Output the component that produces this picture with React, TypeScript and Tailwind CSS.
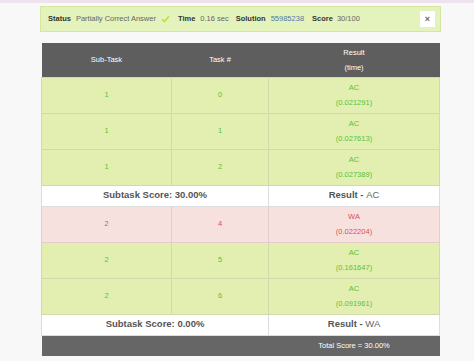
import React from 'react'

type Row = {
  sub: number
  task: number
  verdict: string
  time: string
}

const groups: { rows: Row[]; score: string; result: string }[] = [
  {
    rows: [
      { sub: 1, task: 0, verdict: 'AC', time: '0.021291' },
      { sub: 1, task: 1, verdict: 'AC', time: '0.027613' },
      { sub: 1, task: 2, verdict: 'AC', time: '0.027389' },
    ],
    score: '30.00%',
    result: 'AC',
  },
  {
    rows: [
      { sub: 2, task: 4, verdict: 'WA', time: '0.022204' },
      { sub: 2, task: 5, verdict: 'AC', time: '0.161647' },
      { sub: 2, task: 6, verdict: 'AC', time: '0.091961' },
    ],
    score: '0.00%',
    result: 'WA',
  },
]

function Check() {
  return (
    <svg width="9" height="8" viewBox="0 0 9 8" className="inline-block">
      <path d="M1 4.2 L3.4 6.6 L8 1.2" fill="none" stroke="#c8d84a" strokeWidth="1.6" />
    </svg>
  )
}

export default function App() {
  return (
    <div
      className="h-[361px] w-[474px] overflow-hidden border-t-[3px] border-[#efe2ef] bg-[#f8f8f8] text-[7.5px] text-[#555]"
      style={{ fontFamily: '"Liberation Sans", Arial, sans-serif' }}
    >
      <div className="ml-[40px] mt-[3px] flex h-[26px] w-[401px] items-center border border-[#d6e6a0] bg-[#e4f2bb] pl-[7px] pr-[5px]">
        <span className="font-bold text-[#333]">Status</span>
        <span className="ml-[5px] text-[#666]">Partially Correct Answer</span>
        <span className="ml-[5px]"><Check /></span>
        <span className="ml-[8px] font-bold text-[#333]">Time</span>
        <span className="ml-[5px] text-[#666]">0.16 sec</span>
        <span className="ml-[7px] font-bold text-[#333]">Solution</span>
        <span className="ml-[5px] text-[#5577a6]">55985238</span>
        <span className="ml-[8px] font-bold text-[#333]">Score</span>
        <span className="ml-[4px] text-[#666]">30/100</span>
        <button className="ml-auto flex h-[16px] w-[15px] items-center justify-center bg-white text-[9px] font-bold leading-none text-[#666]">
          ×
        </button>
      </div>

      <table className="ml-[41px] mt-[11px] w-[399px] border-collapse text-center">
        <colgroup>
          <col className="w-[130px]" />
          <col className="w-[97px]" />
          <col />
        </colgroup>
        <thead>
          <tr className="h-[34px] bg-[#5e5e5e] font-normal text-white">
            <th className="font-normal">Sub-Task</th>
            <th className="font-normal">Task #</th>
            <th className="font-normal leading-[15px]">
              Result
              <br />
              (time)
            </th>
          </tr>
        </thead>
        <tbody>
          {groups.map((g, gi) => (
            <React.Fragment key={gi}>
              {g.rows.map((r) => {
                const ok = r.verdict === 'AC'
                const cell = ok
                  ? 'border border-[#d2d9ad] bg-[#e2efb0] text-[#5cbf3a]'
                  : 'border border-[#e6cccb] bg-[#f7e1df] text-[#d6505a]'
                return (
                  <tr key={r.task} className="h-[36px]">
                    <td className={cell}>{r.sub}</td>
                    <td className={cell}>{r.task}</td>
                    <td className={`${cell} leading-[15px]`}>
                      {r.verdict}
                      <br />({r.time})
                    </td>
                  </tr>
                )
              })}
              <tr className="h-[21px] bg-white text-[9.5px] text-[#555]">
                <td colSpan={2} className="border border-[#ddd] font-bold">
                  Subtask Score: {g.score}
                </td>
                <td className="border border-[#ddd]">
                  <span className="font-bold">Result - </span>
                  <span className="text-[#666]">{g.result}</span>
                </td>
              </tr>
            </React.Fragment>
          ))}
          <tr className="h-[21px] bg-[#666] text-white">
            <td colSpan={2}></td>
            <td>Total Score = 30.00%</td>
          </tr>
        </tbody>
      </table>
    </div>
  )
}
